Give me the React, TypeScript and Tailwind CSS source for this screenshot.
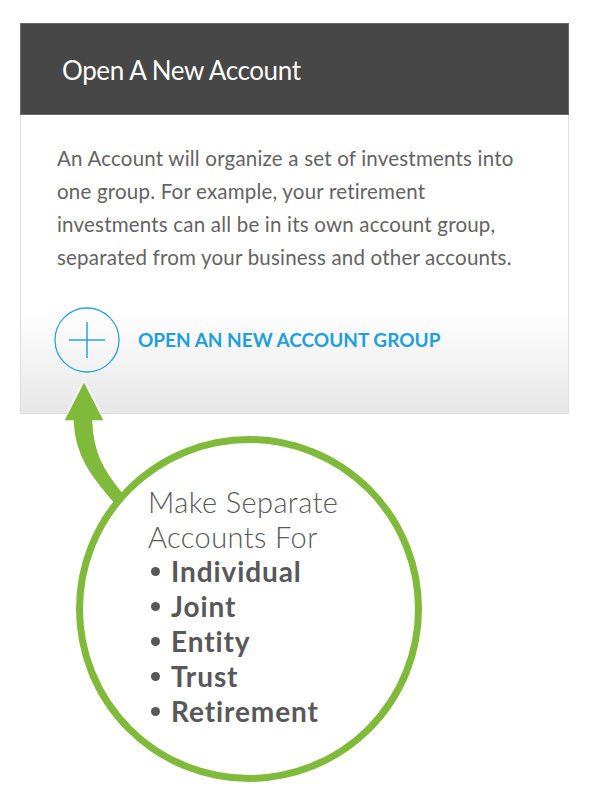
import React from "react";

const items = ["Individual", "Joint", "Entity", "Trust", "Retirement"];

function PlusCircle() {
  return (
    <svg width="66" height="66" viewBox="0 0 66 66" className="shrink-0">
      <circle cx="33" cy="33" r="32" fill="none" stroke="#2ba3dc" strokeWidth="1.3" />
      <line x1="15" y1="33" x2="51" y2="33" stroke="#2ba3dc" strokeWidth="1.5" />
      <line x1="33" y1="15" x2="33" y2="51" stroke="#2ba3dc" strokeWidth="1.5" />
    </svg>
  );
}

function Arrow() {
  return (
    <svg
      className="pointer-events-none absolute left-0 top-0"
      width="592"
      height="812"
      viewBox="0 0 592 812"
    >
      <path
        d="M84 381 L104.5 421 L93 421 C94 452 104 470 124 494 L116 506 C90 477 74 455 73 421 L63.5 421 Z"
        fill="#7fba3b"
        stroke="#ffffff"
        strokeWidth="1.5"
      />
    </svg>
  );
}

export default function App() {
  return (
    <div
      className="relative h-[812px] w-[592px] overflow-hidden bg-white"
      style={{ fontFamily: "Lato, 'Liberation Sans', sans-serif" }}
    >
      <div className="ml-[20px] mt-[23px] w-[549px] border border-t-0 border-[#dedede]">
        <div className="-mx-px flex h-[92px] items-center border border-[#6a6a6a] bg-[#474747] pl-[41px] pt-[3px]">
          <h1 className="text-[26px] font-normal tracking-[-0.4px] text-white">
            Open A New Account
          </h1>
        </div>

        <div className="bg-gradient-to-b from-white from-[65%] to-[#e7e7e7] pb-[40px] pl-[36px] pr-[30px] pt-[27px]">
          <p className="w-[470px] text-[20.5px] leading-[33px] tracking-[0.2px] text-[#636363]">
            An Account will organize a set of investments into one group. For
            example, your retirement investments can all be in its own account
            group, separated from your business and other accounts.
          </p>

          <div className="-ml-[3px] mt-[33px] flex items-center gap-[18px]">
            <PlusCircle />
            <span className="text-[19px] font-bold text-[#1fa0db]">
              OPEN AN NEW ACCOUNT GROUP
            </span>
          </div>
        </div>
      </div>

      <Arrow />

      <div className="relative ml-[76px] mt-[22px] h-[346px] w-[346px] rounded-full border-[7px] border-[#7fba3b] pl-[65px] pt-[41px] text-[#58585a]">
        <div className="text-[29px] font-light leading-[35px] tracking-[0.4px]">Make Separate</div>
        <div className="text-[29px] font-light leading-[35px] tracking-[0.4px]">Accounts For</div>
        {items.map((item) => (
          <div
            key={item}
            className="flex items-center text-[28px] font-bold leading-[35px] tracking-[0.9px]"
          >
            <span className="mr-[11px] ml-[3px] h-[9px] w-[9px] rounded-full bg-[#58585a]" />
            {item}
          </div>
        ))}
      </div>
    </div>
  );
}
